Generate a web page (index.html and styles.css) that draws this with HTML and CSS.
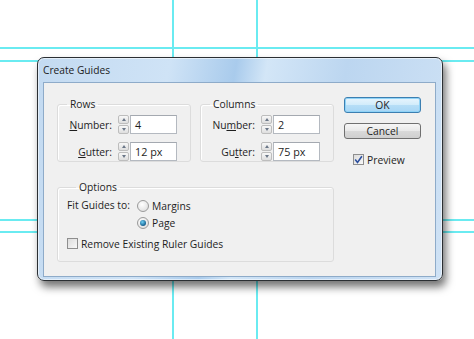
FILE: index.html
```html
<!DOCTYPE html>
<html lang="en">
<head>
    <meta charset="UTF-8">
    <title>Create Guides</title>
    <link rel="stylesheet" href="styles.css">
</head>
<body>
    <div class="desk">
        <!-- guides drawn on the page behind the dialog -->
        <div class="guide v" style="left: 172px"></div>
        <div class="guide v" style="left: 256px"></div>
        <div class="guide h" style="top: 47px"></div>
        <div class="guide h" style="top: 60px"></div>
        <div class="guide h" style="top: 219px"></div>
        <div class="guide h" style="top: 231px"></div>

        <div class="dialog">
            <div class="titlebar">Create Guides</div>
            <div class="client">
                <div class="groups">
                    <div class="group-row">
                        <fieldset class="group">
                            <legend>Rows</legend>
                            <div class="field">
                                <label><u>N</u>umber:</label>
                                <span class="spin"><i class="up"></i><i class="down"></i></span>
                                <span class="input">4</span>
                            </div>
                            <div class="field">
                                <label><u>G</u>utter:</label>
                                <span class="spin"><i class="up"></i><i class="down"></i></span>
                                <span class="input">12 px</span>
                            </div>
                        </fieldset>
                        <fieldset class="group">
                            <legend>Columns</legend>
                            <div class="field">
                                <label>Nu<u>m</u>ber:</label>
                                <span class="spin"><i class="up"></i><i class="down"></i></span>
                                <span class="input">2</span>
                            </div>
                            <div class="field">
                                <label>Gu<u>t</u>ter:</label>
                                <span class="spin"><i class="up"></i><i class="down"></i></span>
                                <span class="input">75 px</span>
                            </div>
                        </fieldset>
                    </div>
                    <fieldset class="group options">
                        <legend>Options</legend>
                        <div class="fit">
                            <span class="fit-label">Fit Guides to:</span>
                            <div class="radios">
                                <div class="choice"><span class="radio"></span>Margins</div>
                                <div class="choice"><span class="radio on"></span>Page</div>
                            </div>
                        </div>
                        <div class="choice remove"><span class="check"></span>Remove Existing Ruler Guides</div>
                    </fieldset>
                </div>
                <div class="buttons">
                    <div class="btn default">OK</div>
                    <div class="btn">Cancel</div>
                    <div class="choice preview">
                        <span class="check on">
                            <svg width="9" height="9" viewBox="0 0 9 9"><path d="M1.2 4.6 L3.5 7.4 L7.9 1.2" fill="none" stroke="#2c4f9e" stroke-width="1.6"/></svg>
                        </span>Preview
                    </div>
                </div>
            </div>
        </div>
    </div>
</body>
</html>
```

FILE: styles.css
```css
body {
    margin: 0;
    background: #ffffff;
    font-family: "Open Sans", sans-serif;
    font-size: 10.3px;
    color: #1e1e1e;
}
.desk {
    position: relative;
    width: 474px;
    height: 339px;
    overflow: hidden;
    padding-top: 57px;
    box-sizing: border-box;
}
.guide {
    position: absolute;
    background: #6aebf1;
}
.guide.v {
    top: 0;
    bottom: 0;
    width: 2px;
}
.guide.h {
    left: 0;
    right: 0;
    height: 2px;
}
.dialog {
    position: relative;
    margin-left: 37px;
    width: 406px;
    height: 224px;
    box-sizing: border-box;
    border: 1px solid #2b2f33;
    border-radius: 7px;
    background: linear-gradient(100deg, #c3daf1 0%, #cfe3f6 30%, #a9cbec 45%, #d3e6f7 52%, #bcd6f0 70%, #cfe2f5 100%);
    box-shadow: 3px 6px 9px rgba(0, 0, 0, 0.55), inset 0 0 0 1px rgba(255, 255, 255, 0.55);
}
.titlebar {
    height: 24px;
    line-height: 24px;
    padding-left: 5px;
    font-size: 10.2px;
    color: #1b1b1b;
}
.client {
    display: flex;
    margin: 0 6px 0 5px;
    height: 195px;
    box-sizing: border-box;
    border: 1px solid #8eabc9;
    background: #f0f0f0;
    padding: 14px 0 0 13px;
}
.group-row {
    display: flex;
    gap: 9px;
}
.group {
    margin: 0;
    padding: 4px 0 0 0;
    min-width: 0;
    width: 134px;
    box-sizing: border-box;
    border: 1px solid #dcdcdc;
    border-radius: 3px;
    box-shadow: inset 1px 1px 0 #ffffff;
}
.group legend {
    margin-left: 9px;
    padding: 0 3px;
    line-height: 14px;
}
.field {
    display: flex;
    align-items: center;
    height: 19px;
    margin-bottom: 8px;
}
.field:last-child {
    margin-bottom: 0;
}
.field label {
    width: 54px;
    text-align: right;
    margin-right: 6px;
}
.spin {
    display: flex;
    flex-direction: column;
    gap: 1px;
    width: 11px;
    height: 19px;
    margin-right: 1px;
}
.spin i {
    flex: 1;
    display: flex;
    align-items: center;
    justify-content: center;
    border: 1px solid #bdbdbd;
    border-radius: 2px;
    background: linear-gradient(#f8f8f8, #dedede);
}
.spin i::after {
    content: "";
    border-left: 2.5px solid transparent;
    border-right: 2.5px solid transparent;
}
.spin .up::after {
    border-bottom: 3px solid #6b7788;
}
.spin .down::after {
    border-top: 3px solid #6b7788;
}
.input {
    width: 47px;
    height: 19px;
    box-sizing: border-box;
    border: 1px solid #b4b9c0;
    border-top-color: #a4a9b0;
    background: #ffffff;
    padding-left: 4px;
    line-height: 17px;
    font-size: 10.8px;
}
.options {
    width: 277px;
    margin-top: 18px;
    padding: 4px 0 10px 9px;
}
.fit {
    display: flex;
}
.fit-label {
    width: 70px;
    line-height: 15px;
}
.choice {
    display: flex;
    align-items: center;
    height: 15px;
}
.radios .choice + .choice {
    margin-top: 2px;
}
.radio {
    width: 12px;
    height: 12px;
    box-sizing: border-box;
    border-radius: 50%;
    border: 1px solid #9a9a9a;
    background: radial-gradient(circle at 40% 35%, #ffffff, #d8d8d8);
    margin-right: 3px;
    display: flex;
    align-items: center;
    justify-content: center;
}
.radio.on::after {
    content: "";
    width: 6px;
    height: 6px;
    border-radius: 50%;
    background: radial-gradient(circle at 40% 35%, #6fd0f5, #14608f 70%, #0b3e61);
}
.remove {
    margin-top: 6px;
}
.check {
    width: 11px;
    height: 11px;
    box-sizing: border-box;
    border: 1px solid #8e8e8e;
    background: linear-gradient(135deg, #dcdcdc, #f8f8f8);
    margin-right: 3px;
    display: flex;
    align-items: center;
    justify-content: center;
}
.buttons {
    display: flex;
    flex-direction: column;
    margin-left: 10px;
    width: 77px;
}
.btn {
    height: 16px;
    box-sizing: border-box;
    border: 1px solid #707070;
    border-radius: 3px;
    background: linear-gradient(#f6f6f6 0%, #e9e9e9 48%, #d9d9d9 52%, #cfcfcf 100%);
    text-align: center;
    line-height: 14px;
    margin-bottom: 10px;
}
.btn.default {
    border-color: #3c7fb1;
    background: linear-gradient(#e8f5fd 0%, #d2ecfb 48%, #b6def7 52%, #a7d6f5 100%);
    box-shadow: inset 0 0 0 1px #8fd3f7;
}
.preview {
    margin: 3px 0 0 9px;
}
```
